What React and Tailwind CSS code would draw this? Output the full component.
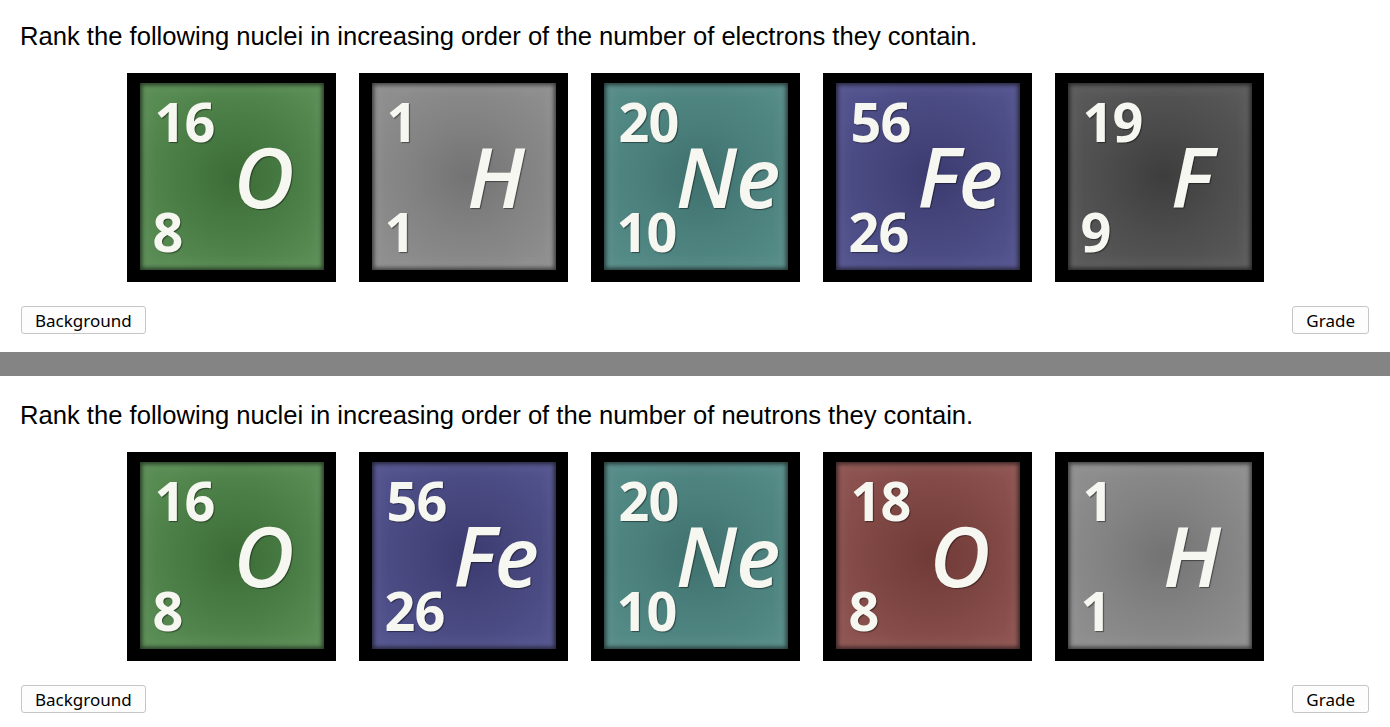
import React from "react";

const COLORS = {
  green: { edge: "#578b52", mid: "#4a7d45", center: "#3c6c37" },
  gray: { edge: "#8d8d8d", mid: "#838383", center: "#737373" },
  teal: { edge: "#538a86", mid: "#4b807c", center: "#3f716d" },
  purple: { edge: "#50508c", mid: "#48487f", center: "#3b3b70" },
  dark: { edge: "#575757", mid: "#4d4d4d", center: "#3d3d3d" },
  red: { edge: "#8b514e", mid: "#7f4744", center: "#703a37" },
};

const QUESTIONS = [
  {
    text: "Rank the following nuclei in increasing order of the number of electrons they contain.",
    pad: "pt-[22px]",
    nuclei: [
      { mass: "16", z: "8", sym: "O", color: "green" },
      { mass: "1", z: "1", sym: "H", color: "gray" },
      { mass: "20", z: "10", sym: "Ne", color: "teal" },
      { mass: "56", z: "26", sym: "Fe", color: "purple" },
      { mass: "19", z: "9", sym: "F", color: "dark" },
    ],
  },
  {
    text: "Rank the following nuclei in increasing order of the number of neutrons they contain.",
    pad: "pt-[25px]",
    nuclei: [
      { mass: "16", z: "8", sym: "O", color: "green" },
      { mass: "56", z: "26", sym: "Fe", color: "purple" },
      { mass: "20", z: "10", sym: "Ne", color: "teal" },
      { mass: "18", z: "8", sym: "O", color: "red" },
      { mass: "1", z: "1", sym: "H", color: "gray" },
    ],
  },
];

function Tile({ mass, z, sym, color }) {
  const c = COLORS[color];
  // gradient colours come from data, so they go inline
  const face = {
    background: `radial-gradient(ellipse at 52% 50%, ${c.center} 0%, ${c.mid} 45%, ${c.edge} 80%)`,
    boxShadow: `inset 0 0 4px 2px rgba(0,0,0,0.6), inset 0 0 14px 6px rgba(255,255,255,0.07)`,
  };
  return (
    <div className="w-[209px] h-[209px] bg-black pt-[10px] pl-[13px] pr-[12px] pb-[12px]">
      <div
        className="w-full h-full flex flex-col gap-[5px] pt-[18px] text-[#f7f7f2] font-['Open_Sans',sans-serif] font-bold [text-shadow:1px_1px_1px_rgba(0,0,0,0.45)]"
        style={face}
      >
        <div className="pl-[15px] text-[54px] leading-[40px] tracking-[-1px]">{mass}</div>
        <div className="pl-[64px] flex justify-center text-[84px] leading-[60px] italic font-semibold tracking-[-1px]">
          {sym}
        </div>
        <div className="pl-[13px] text-[54px] leading-[40px] tracking-[-1px]">{z}</div>
      </div>
    </div>
  );
}

function Btn({ children }) {
  return (
    <button className="h-[28px] px-[13px] bg-[#fdfdfd] border border-[#c6c6c6] rounded-[3px] text-[17px] leading-none text-black font-['Noto_Sans',sans-serif]">
      {children}
    </button>
  );
}

function Question({ q }) {
  return (
    <div className={`${q.pad} pb-[18px]`}>
      <div className="pl-[20px] text-[25.6px] leading-[28px] text-black font-['Liberation_Sans',Arial,sans-serif]">
        {q.text}
      </div>
      <div className="mt-[23px] flex justify-center gap-[23px]">
        {q.nuclei.map((n, i) => (
          <Tile key={i} {...n} />
        ))}
      </div>
      <div className="mt-[24px] flex justify-between px-[21px]">
        <Btn>Background</Btn>
        <Btn>Grade</Btn>
      </div>
    </div>
  );
}

export default function App() {
  return (
    <div className="w-[1390px] min-h-[727px] bg-white">
      <Question q={QUESTIONS[0]} />
      <div className="h-[24px] bg-[#848484]" />
      <Question q={QUESTIONS[1]} />
    </div>
  );
}
